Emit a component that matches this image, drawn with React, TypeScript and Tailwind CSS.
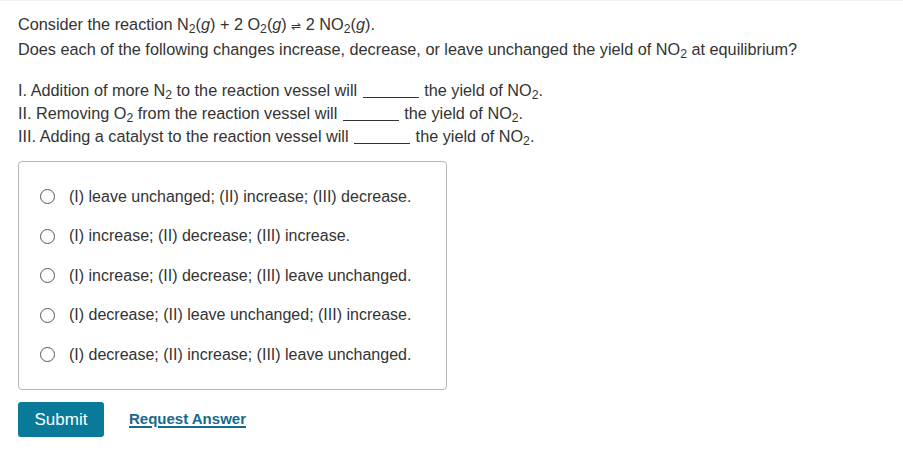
import { useState } from "react";

const options = [
    "(I) leave unchanged; (II) increase; (III) decrease.",
    "(I) increase; (II) decrease; (III) increase.",
    "(I) increase; (II) decrease; (III) leave unchanged.",
    "(I) decrease; (II) leave unchanged; (III) increase.",
    "(I) decrease; (II) increase; (III) leave unchanged.",
];

function Blank() {
    return <span className="inline-block w-[56px] h-[14px] border-b border-[#333333] align-[-2px] mx-[1px]" />;
}

export default function App() {
    const [selected, setSelected] = useState<number | null>(null);

    return (
        <div className="min-h-[450px] w-[903px] bg-white border-t border-[#eeeeee] text-[#333333] font-['Liberation_Sans',Arial,sans-serif] text-[16.25px]">
            <div className="pl-[18px] pt-[12px]">
                {/* Question text */}
                <p className="leading-[23px]">
                    Consider the reaction N<sub>2</sub>(<i>g</i>) + 2 O<sub>2</sub>(<i>g</i>){" "}
                    <span className="text-[12px]">⇌</span> 2 NO<sub>2</sub>(<i>g</i>).
                </p>
                <p className="leading-[23px]">
                    Does each of the following changes increase, decrease, or leave unchanged the yield of NO<sub>2</sub> at equilibrium?
                </p>

                <div className="mt-[18px] leading-[23px]">
                    <p>
                        I. Addition of more N<sub>2</sub> to the reaction vessel will <Blank /> the yield of NO<sub>2</sub>.
                    </p>
                    <p>
                        II. Removing O<sub>2</sub> from the reaction vessel will <Blank /> the yield of NO<sub>2</sub>.
                    </p>
                    <p>
                        III. Adding a catalyst to the reaction vessel will <Blank /> the yield of NO<sub>2</sub>.
                    </p>
                </div>

                {/* Answer choices */}
                <div className="mt-[13px] w-[429px] h-[229px] border border-[#b5b5b5] rounded-[4px] pt-[15px] pl-[20px] text-[16px]">
                    {options.map((opt, i) => (
                        <label key={i} className="flex items-center h-[39.5px] cursor-pointer">
                            <span
                                onClick={() => setSelected(i)}
                                className="w-[15px] h-[15px] rounded-full border border-[#555555] bg-white flex items-center justify-center ml-[1px]"
                            >
                                {selected === i && <span className="w-[7px] h-[7px] rounded-full bg-[#333333]" />}
                            </span>
                            <span className="ml-[14px]">{opt}</span>
                        </label>
                    ))}
                </div>

                {/* Actions */}
                <div className="mt-[12px] flex items-center">
                    <button className="w-[86px] h-[35px] rounded-[3px] bg-[#097a9a] text-white text-[17px]">
                        Submit
                    </button>
                    <a href="#" className="ml-[25px] text-[15px] font-bold text-[#166a8c] underline underline-offset-2 decoration-[1.5px]">
                        Request Answer
                    </a>
                </div>
            </div>
        </div>
    );
}
